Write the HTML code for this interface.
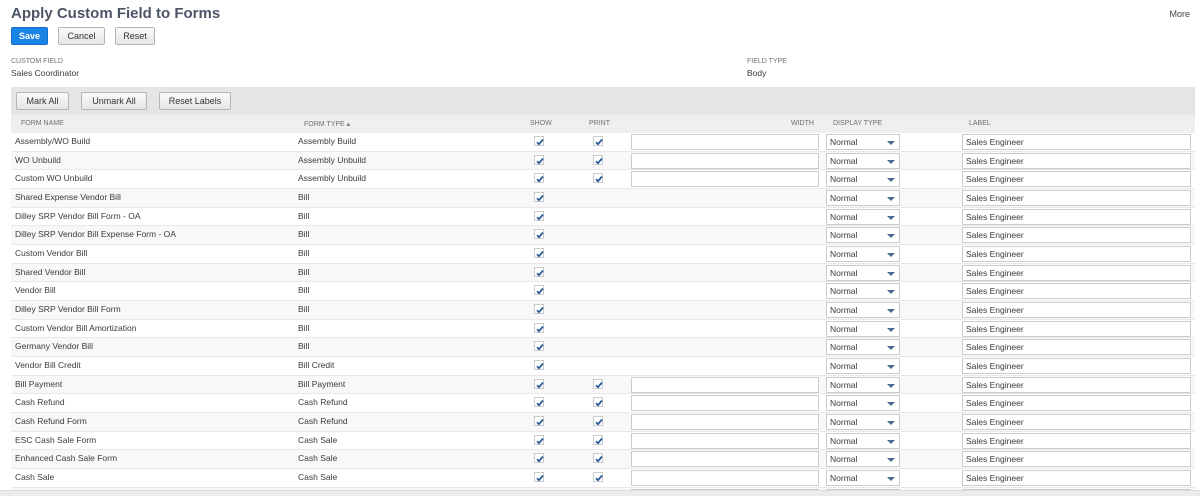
<!DOCTYPE html><html><head><style>
*{box-sizing:border-box;margin:0;padding:0}
html,body{width:1200px;height:496px;overflow:hidden}
body{background:#fff;font-family:"Liberation Sans",sans-serif;color:#3a3a3a;position:relative;font-size:8.5px}
.a{position:absolute;white-space:nowrap}
h1{position:absolute;left:11px;top:5px;font-size:15px;color:#4d5465;font-weight:bold}
.btn{position:absolute;height:18px;border:1px solid #b5b5b5;background:linear-gradient(#fafafa,#e5e5e5);border-radius:2px;font-size:9px;text-align:center;line-height:16px;color:#333}
.lbl{font-size:7px;color:#6f6f6f}
.row{position:absolute;left:11px;width:1184px;height:18.67px;border-bottom:1px solid #e8e8e8}
.cb{position:absolute;width:10px;height:10px;border:1px solid #ccc;background:#fff;top:3px}
.cb svg{position:absolute;left:1px;top:1px}
.inp{position:absolute;top:1px;height:16px;border:1px solid #ccc;background:#fff;font-size:8.5px;line-height:14px;padding-left:3px}
.tri{position:absolute;right:4px;top:6px;width:0;height:0;border-left:4px solid transparent;border-right:4px solid transparent;border-top:4px solid #4d6890}
</style></head><body>
<h1>Apply Custom Field to Forms</h1>
<div class="a" style="right:10px;top:9px;font-size:9px;color:#444">More</div>
<div class="btn" style="left:11px;top:27px;width:37px;background:#1b82e6;border-color:#1570c9;color:#fff;font-weight:bold">Save</div>
<div class="btn" style="left:58px;top:27px;width:47px">Cancel</div>
<div class="btn" style="left:115px;top:27px;width:40px">Reset</div>
<div class="a lbl" style="left:11px;top:58px">CUSTOM FIELD</div>
<div class="a" style="left:11px;top:68px">Sales Coordinator</div>
<div class="a lbl" style="left:747px;top:58px">FIELD TYPE</div>
<div class="a" style="left:747px;top:68px">Body</div>
<div class="a" style="left:11px;top:87px;width:1184px;height:46px;background:#e5e5e5"></div>
<div class="a" style="left:11px;top:115px;width:1184px;height:18px;background:#efefef"></div>
<div class="btn" style="left:16px;top:92px;width:53px">Mark All</div>
<div class="btn" style="left:81px;top:92px;width:66px">Unmark All</div>
<div class="btn" style="left:159px;top:92px;width:72px">Reset Labels</div>
<div class="a lbl" style="left:21px;top:120px">FORM NAME</div>
<div class="a lbl" style="left:304px;top:120px">FORM TYPE ▴</div>
<div class="a lbl" style="left:530px;top:120px">SHOW</div>
<div class="a lbl" style="left:589px;top:120px">PRINT</div>
<div class="a lbl" style="left:791px;top:120px">WIDTH</div>
<div class="a lbl" style="left:833px;top:120px">DISPLAY TYPE</div>
<div class="a lbl" style="left:969px;top:120px">LABEL</div>
<div id="rows"></div>
<div class="a" style="left:0;top:490px;width:1200px;height:6px;background:#ececec;border-top:1px solid #ddd"></div>
<script>
var d=[["Assembly/WO Build","Assembly Build",1],["WO Unbuild","Assembly Unbuild",1],["Custom WO Unbuild","Assembly Unbuild",1],["Shared Expense Vendor Bill","Bill",0],["Dilley SRP Vendor Bill Form - OA","Bill",0],["Dilley SRP Vendor Bill Expense Form - OA","Bill",0],["Custom Vendor Bill","Bill",0],["Shared Vendor Bill","Bill",0],["Vendor Bill","Bill",0],["Dilley SRP Vendor Bill Form","Bill",0],["Custom Vendor Bill Amortization","Bill",0],["Germany Vendor Bill","Bill",0],["Vendor Bill Credit","Bill Credit",0],["Bill Payment","Bill Payment",1],["Cash Refund","Cash Refund",1],["Cash Refund Form","Cash Refund",1],["ESC Cash Sale Form","Cash Sale",1],["Enhanced Cash Sale Form","Cash Sale",1],["Cash Sale","Cash Sale",1],["Check","Check",1]];
var ck='<svg width="8" height="8" viewBox="0 0 8 8"><path d="M1 4.2L3 6.2L7 1.5" stroke="#2a5d9a" stroke-width="1.8" fill="none"/></svg>';
var h='';
d.forEach(function(r,i){var t=133+i*18.67;
h+='<div class="row" style="top:'+t+'px;background:'+(i%2?'#f8f8f8':'#fff')+'">'+
'<div class="a" style="left:4px;top:3px">'+r[0]+'</div><div class="a" style="left:287px;top:3px">'+r[1]+'</div>'+
'<div class="cb" style="left:523px">'+ck+'</div>'+
(r[2]?'<div class="cb" style="left:582px">'+ck+'</div><div class="inp" style="left:620px;width:188px"></div>':'')+
'<div class="inp" style="left:815px;width:74px">Normal<span class="tri"></span></div>'+
'<div class="inp" style="left:951px;width:229px">Sales Engineer</div></div>';});
document.getElementById('rows').innerHTML=h;
</script>
</body></html>
